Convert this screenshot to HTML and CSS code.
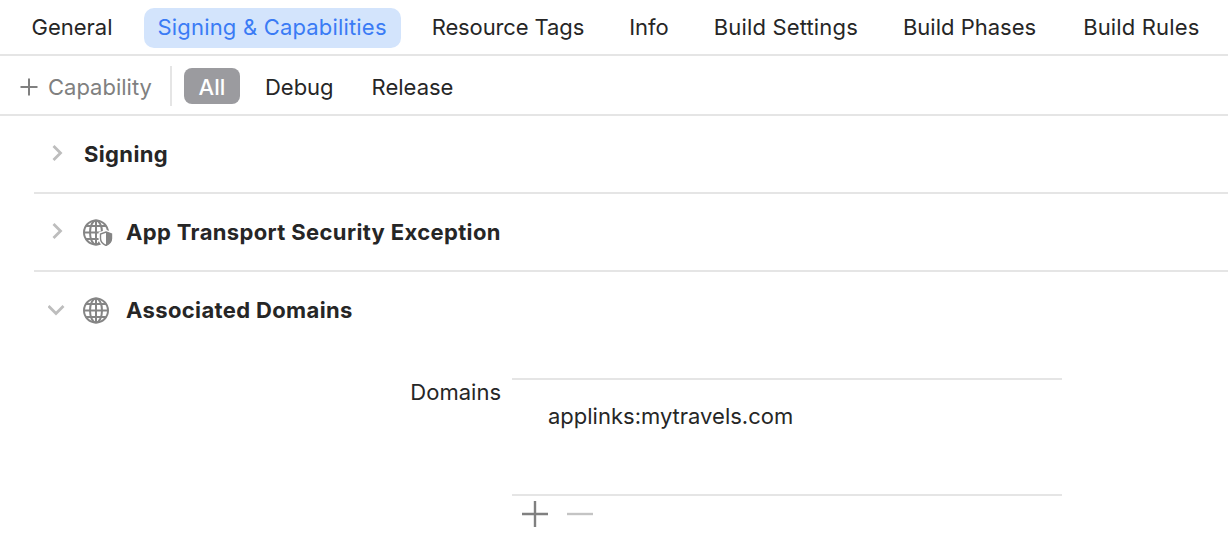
FILE: index.html
```
<!DOCTYPE html>
<html lang="en">
<head>
<meta charset="utf-8">
<title>Signing &amp; Capabilities</title>
<link rel="stylesheet" href="styles.css">
</head>
<body>
<nav class="tabs">
  <a class="tab">General</a>
  <a class="tab active">Signing &amp; Capabilities</a>
  <a class="tab tight">Resource Tags</a>
  <a class="tab">Info</a>
  <a class="tab wide">Build Settings</a>
  <a class="tab">Build Phases</a>
  <a class="tab wide last">Build Rules</a>
</nav>
<div class="toolbar">
  <button class="add-cap">
    <svg class="plus-small" viewBox="0 0 18 18"><path d="M9 0.500V17.500M0.500 9H17.500"/></svg>
    <span>Capability</span>
  </button>
  <span class="divider"></span>
  <span class="seg selected">All</span>
  <span class="seg">Debug</span>
  <span class="seg">Release</span>
</div>
<main>
  <section class="cap">
    <div class="cap-head">
      <svg class="chev" viewBox="0 0 18 18"><path d="M5.500 2L12.500 9L5.500 16"/></svg>
      <h2>Signing</h2>
    </div>
  </section>
  <section class="cap">
    <div class="cap-head">
      <svg class="chev" viewBox="0 0 18 18"><path d="M5.500 2L12.500 9L5.500 16"/></svg>
      <svg class="globe" viewBox="0 0 30 28">
        <g class="g-lines">
          <circle cx="13" cy="14.500" r="12"/>
          <ellipse cx="13" cy="14.500" rx="6" ry="12"/>
          <path d="M13 2.500V26.500M3 8H23M1 14.500H25M3 21H23"/>
        </g>
        <path class="shield-halo" d="M23 14L28.500 16V20.500C28.500 24 26 26 23 27.500C20 26 17.500 24 17.500 20.500V16Z"/>
        <path class="shield" d="M23 14L28.500 16V20.500C28.500 24 26 26 23 27.500C20 26 17.500 24 17.500 20.500V16Z"/>
        <path class="shield-fill" d="M23 14V27.500C26 26 28.500 24 28.500 20.500V16Z"/>
      </svg>
      <h2>App Transport Security Exception</h2>
    </div>
  </section>
  <section class="cap open">
    <div class="cap-head">
      <svg class="chev" viewBox="0 0 18 18"><path d="M0.500 6L8 13.500L15.500 6"/></svg>
      <svg class="globe" viewBox="0 0 30 28">
        <g class="g-lines">
          <circle cx="13" cy="14.500" r="12"/>
          <ellipse cx="13" cy="14.500" rx="6" ry="12"/>
          <path d="M13 2.500V26.500M3 8H23M1 14.500H25M3 21H23"/>
        </g>
      </svg>
      <h2>Associated Domains</h2>
    </div>
    <div class="field">
      <div class="field-label">Domains</div>
      <div class="field-box">
        <div class="list">
          <div class="list-item">applinks:mytravels.com</div>
        </div>
        <div class="list-actions">
          <svg class="act-plus" viewBox="0 0 28 28"><path d="M14 1V27M1 14H27"/></svg>
          <svg class="act-minus" viewBox="0 0 28 28"><path d="M1 14H27"/></svg>
        </div>
      </div>
    </div>
  </section>
</main>
</body>
</html>
```
FILE: styles.css
```
* { box-sizing: border-box; }
html, body { margin: 0; padding: 0; }
body {
  width: 1228px;
  height: 550px;
  overflow: hidden;
  background: #fff;
  color: #262626;
  font-family: Inter, "Liberation Sans", sans-serif;
  font-size: 22px;
}
.tabs {
  display: flex;
  align-items: center;
  gap: 17px;
  height: 56px;
  padding: 0 0 0 17.500px;
  border-bottom: 2px solid #e5e5e5;
}
.tab {
  display: flex;
  align-items: center;
  height: 40px;
  margin-top: 2px;
  padding: 0 14px 2px;
  border-radius: 10px;
  white-space: nowrap;
}
.tab.active {
  background: #d3e4fc;
  color: #3a7bf5;
  letter-spacing: 0.18px;
}
.tab.tight { letter-spacing: -0.12px; }
.tab.wide { letter-spacing: 0.16px; }
.tab.last { margin-left: 2px; }
.toolbar {
  display: flex;
  align-items: center;
  height: 60px;
  padding: 2px 0 0 20px;
  border-bottom: 2px solid #e5e5e5;
}
.add-cap {
  display: flex;
  align-items: center;
  gap: 10px;
  padding: 2px 0 0;
  border: 0;
  background: none;
  color: #808080;
  font: inherit;
}
.plus-small { width: 18px; height: 18px; }
.plus-small path { fill: none; stroke: #808080; stroke-width: 2; }
.divider {
  width: 2px;
  height: 40px;
  margin-left: 18px;
  background: #e5e5e5;
}
.seg {
  display: flex;
  align-items: center;
  justify-content: center;
  height: 36px;
  padding: 2px 12px 0;
  border-radius: 8px;
}
.seg.selected {
  width: 56px;
  margin-left: 12px;
  margin-right: 13px;
  background: #9b9b9f;
  color: #fff;
  font-weight: 500;
}
.seg + .seg + .seg { margin-left: 14px; }
main { padding-left: 34px; }
.cap { border-bottom: 2px solid #e5e5e5; }
.cap.open { border-bottom: 0; }
.cap-head {
  display: flex;
  align-items: center;
  height: 76px;
  padding-left: 14px;
}
.chev { width: 18px; height: 18px; margin-right: 18px; margin-top: -3px; }
.chev path { fill: none; stroke: #bdbdbd; stroke-width: 2.800; }
.chev + .globe { margin-left: -1px; }
.globe { width: 30px; height: 28px; margin-right: 13px; margin-top: -1px; }
.g-lines { fill: none; stroke: #858585; stroke-width: 2; }
.shield-halo { fill: #fff; stroke: #fff; stroke-width: 4; }
.shield { fill: #fff; stroke: #858585; stroke-width: 1.400; }
.shield-fill { fill: #858585; }
h2 {
  margin: 0;
  font-size: 22px;
  font-weight: 700;
  line-height: 28px;
  letter-spacing: 0.36px;
}
.field {
  display: flex;
  margin-top: 30px;
}
.field-label {
  width: 467px;
  line-height: 28px;
  text-align: right;
}
.field-box {
  width: 550px;
  margin-left: 11px;
}
.list {
  height: 118px;
  padding: 22px 0 0 36px;
  border-top: 2px solid #e5e5e5;
  border-bottom: 2px solid #e5e5e5;
  line-height: 28px;
}
.list-actions {
  display: flex;
  align-items: center;
  gap: 17px;
  height: 36px;
  padding-left: 8.500px;
}
.act-plus, .act-minus { width: 28px; height: 28px; }
.act-plus path { fill: none; stroke: #808080; stroke-width: 2.400; }
.act-minus path { fill: none; stroke: #c4c4c4; stroke-width: 2.400; }
```
